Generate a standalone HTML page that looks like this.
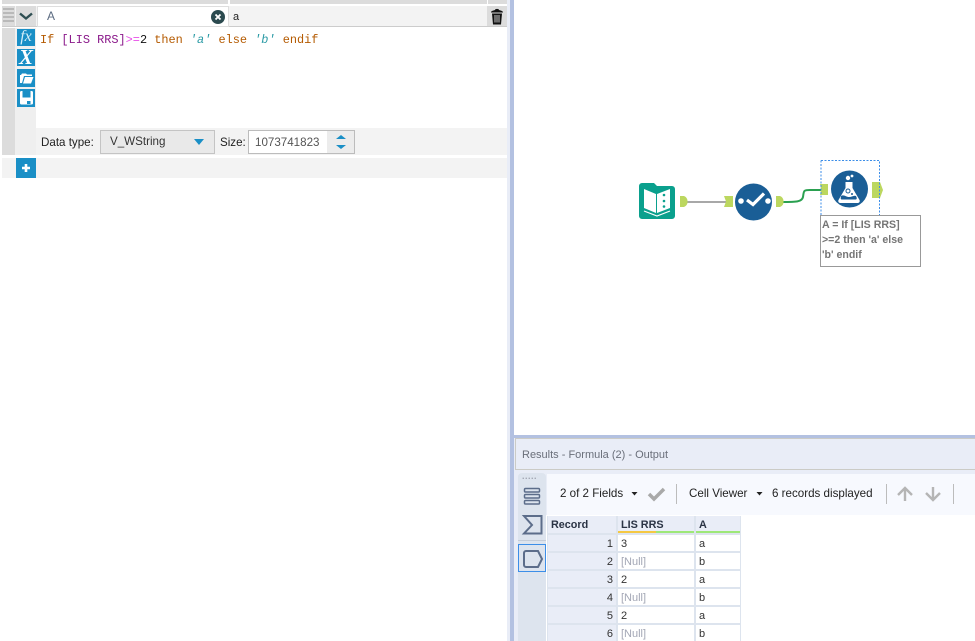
<!DOCTYPE html>
<html><head><meta charset="utf-8"><style>
html,body{margin:0;padding:0;background:#fff}
#p{position:relative;width:975px;height:641px;overflow:hidden;background:#fff;font-family:"Liberation Sans",sans-serif;font-size:11.6px;color:#222}
#p div,#p svg{position:absolute}
.t{white-space:nowrap;line-height:16px}
.ib{background:#1a8fc6;left:17px;width:18px}
.h{background:#e9edf7;top:516px;height:17px;font-weight:bold;font-size:10.8px;line-height:18px;color:#2a3344}
.c{background:#fff;height:16px;font-size:11px;line-height:18px;color:#333}
.r{background:#e9edf7;left:548px;width:68px;height:16px;font-size:11px;line-height:18px;text-align:right;color:#333}
.n{color:#a3a7b5}
</style></head><body><div id="p">

<!-- top tabs -->
<div style="left:2px;top:0;width:226px;height:4px;background:#dcdcdc"></div>
<div style="left:230px;top:0;width:277px;height:4px;background:#dcdcdc"></div>
<div style="left:487px;top:0;width:1px;height:4px;background:#fff"></div>

<!-- row -->
<div style="left:2px;top:6px;width:505px;height:20px;background:#f3f3f3"></div>
<div style="left:2px;top:26px;width:505px;height:1px;background:#ccc"></div>
<div style="left:2px;top:6px;width:13px;height:20px;background:#dcdcdc"></div>
<div style="left:3px;top:8px;width:11px;height:2px;background:#b9b9b9"></div>
<div style="left:3px;top:12px;width:11px;height:2px;background:#b9b9b9"></div>
<div style="left:3px;top:16px;width:11px;height:2px;background:#b9b9b9"></div>
<div style="left:3px;top:20px;width:11px;height:2px;background:#b9b9b9"></div>
<div style="left:16px;top:6px;width:20px;height:20px;background:#dcdcdc"></div>
<svg style="left:16px;top:6px" width="20" height="20"><path d="M4 7.500l6 5 6-5" fill="none" stroke="#2f4f53" stroke-width="2.400"/></svg>
<div style="left:37px;top:6px;width:190px;height:19px;background:#fff;border:1px solid #dedede"></div>
<div class="t" style="left:47px;top:8px;color:#5a6a80;font-size:12px">A</div>
<svg style="left:210px;top:9px" width="16" height="16"><circle cx="8" cy="8" r="7" fill="#2b4a4f"/><path d="M5.500 5.500l5 5M10.500 5.500l-5 5" stroke="#fff" stroke-width="1.800"/></svg>
<div class="t" style="left:233px;top:9px;font-size:11px">a</div>
<div style="left:487px;top:6px;width:20px;height:20px;background:#dcdcdc"></div>
<svg style="left:487px;top:6px" width="20" height="20"><path d="M4 6.500c0-2 3-2 4-2.500 0-1.500 4-1.500 4 0 1 .5 4 .5 4 2.500z" fill="#111"/><path d="M5 7.500h10l-1 11H6z" fill="#111"/><path d="M8 9v7.500M10 9v7.500M12 9v7.500" stroke="#ddd" stroke-width=".9"/></svg>

<!-- editor -->
<div style="left:2px;top:28px;width:13px;height:127px;background:#dcdcdc"></div>
<div style="left:15px;top:28px;width:21px;height:127px;background:#efefef"></div>
<div class="ib" style="top:29px;height:17px"></div>
<div class="t" style="left:17px;top:29px;width:18px;text-align:center;color:#d5eef9;font:italic 16px 'Liberation Serif',serif;line-height:16px">fx</div>
<div class="ib" style="top:49px;height:17px"></div>
<div class="t" style="left:17px;top:48px;width:18px;text-align:center;color:#fff;font:italic bold 21px 'Liberation Serif',serif;line-height:19px">X</div>
<div class="ib" style="top:69px;height:18px"></div>
<svg style="left:17px;top:69px" width="18" height="18"><path d="M3 14V6h1l1-1.500h4l1 1h5V7H7L5 14z" fill="#fff"/><path d="M6 14.500l2-6.500h8.500L14 14.500z" fill="#fff"/></svg>
<div class="ib" style="top:89px;height:18px"></div>
<svg style="left:17px;top:89px" width="18" height="18"><rect x="3" y="2" width="13" height="13.500" rx="1.500" fill="#fff"/><path d="M5.500 2h8v6.500h-8z" fill="#1a8fc6"/><path d="M10 12h3.500v3H10z" fill="#1a8fc6"/></svg>

<div class="t" style="left:40px;top:32px;font:11.9px/16px 'Liberation Mono',monospace;color:#b45a00"><span style="color:#b45a00">If</span> <span style="color:#8b1a8b">[LIS RRS]</span><span style="color:#e84de8">&gt;=</span><span style="color:#111">2</span> then <span style="color:#2a9aa5;font-style:italic">'a'</span> else <span style="color:#2a9aa5;font-style:italic">'b'</span> endif</div>

<div style="left:36px;top:128px;width:471px;height:27px;background:#f3f3f3"></div>
<div class="t" style="left:41px;top:135px">Data type:</div>
<div style="left:100px;top:130px;width:113px;height:22px;background:#e9e9e9;border:1px solid #c4c4c4"></div>
<div class="t" style="left:110px;top:134px;color:#333">V_WString</div>
<svg style="left:192px;top:138px" width="14" height="8"><path d="M2 1h10L7 7z" fill="#1a8fc6"/></svg>
<div class="t" style="left:220px;top:135px">Size:</div>
<div style="left:248px;top:130px;width:105px;height:22px;background:#fff;border:1px solid #bcbcbc"></div>
<div class="t" style="left:255px;top:135px;color:#555">1073741823</div>
<div style="left:327px;top:131px;width:27px;height:22px;background:#ececec"></div>
<svg style="left:331px;top:133px" width="20" height="18"><path d="M5 6l5-4 5 4z" fill="#1a8fc6"/><path d="M5 12l5 4 5-4z" fill="#1a8fc6"/></svg>

<div style="left:2px;top:158px;width:505px;height:20px;background:#f3f3f3"></div>
<div style="left:16px;top:158px;width:20px;height:20px;background:#1a8fc6"></div>
<svg style="left:16px;top:158px" width="20" height="20"><path d="M10 6v8M6 10h8" stroke="#fff" stroke-width="2.600"/></svg>

<!-- divider -->
<div style="left:507px;top:0;width:3px;height:641px;background:#e9edf7"></div>
<div style="left:510px;top:0;width:4px;height:641px;background:#b3c1e1"></div>

<!-- canvas -->
<svg style="left:630px;top:150px" width="345" height="125" viewBox="0 0 345 125">
<path d="M56 52H97" stroke="#a8a8a8" stroke-width="2" fill="none"/>
<path d="M152 52c14 0 20 0 21-5 1-6 0-7 7-7h14" stroke="#2aa050" stroke-width="2" fill="none"/>
<!-- book icon -->
<path d="M12 33h12l3 3h15a3 3 0 013 3v27a3 3 0 01-3 3H12a3 3 0 01-3-3V36a3 3 0 013-3z" fill="#0aa08d"/>
<path d="M14 39l12 5v19l-12-5zM27 44l13-5v19l-13 5z" fill="#fff"/>
<path d="M14 61l13 5 13-5" stroke="#fff" stroke-width="1.200" fill="none"/>
<circle cx="34" cy="45" r="1.300" fill="#0aa08d"/><circle cx="34" cy="51" r="1.300" fill="#0aa08d"/><circle cx="34" cy="56.500" r="1.300" fill="#0aa08d"/>
<!-- anchors -->
<path d="M50 46h4a6 6 0 010 11h-4z" fill="#bcd75f"/>
<path d="M94 46h9v11h-9l2-5.500z" fill="#bcd75f"/>
<circle cx="123.500" cy="52" r="18.500" fill="#1a5e96"/>
<circle cx="111" cy="51" r="2.800" fill="#fff"/><circle cx="138" cy="51" r="2.800" fill="#fff"/>
<path d="M117 50l6 4.500 11-11" stroke="#fff" stroke-width="3.200" fill="none"/>
<path d="M146 46h4a6 6 0 010 11h-4z" fill="#bcd75f"/>
<path d="M190 34h8v11h-8l1-5.500z" fill="#bcd75f"/>
<circle cx="219.500" cy="39" r="18.500" fill="#1a5e96"/>
<path d="M215.500 32h7v6l7 12a2 2 0 01-2 3h-17a2 2 0 01-2-3l7-12z" fill="#fff"/>
<path d="M211 46c3-2 5 1 8 1s5-2 7-1l.8 2c0 1-.5 1.500-1 1.500h-14c-1 0-1.300-1-1-2z" fill="#1a5e96"/>
<circle cx="218" cy="41" r="2" fill="none" stroke="#1a5e96" stroke-width="1"/><circle cx="222" cy="44" r="1" fill="#1a5e96"/>
<circle cx="218" cy="28" r="2.200" fill="#fff"/><circle cx="222" cy="26" r="1.400" fill="#fff"/>
<path d="M242 32h8l3 8-3 8h-8z" fill="#bcd75f"/>
<path d="M191 10.500H249.500V65M191 10.500V65" fill="none" stroke="#3c8ee8" stroke-width="1" stroke-dasharray="2 1.500"/>
</svg>
<div style="left:820px;top:215px;width:99px;height:50px;background:#fff;border:1px solid #999"></div>
<div class="t" style="left:822px;top:218px;font:bold 10.600px/15px 'Liberation Sans',sans-serif;color:#757575;white-space:pre">A = If [LIS RRS]
&gt;=2 then 'a' else
'b' endif</div>

<!-- results -->
<div style="left:514px;top:435px;width:461px;height:3px;background:#b3c1e1"></div>
<div style="left:514px;top:438px;width:461px;height:203px;background:#e9edf7"></div>
<div style="left:515px;top:438px;width:460px;height:30px;background:#e9edf7;border:1px solid #cbcbc6;border-right:0"></div>
<div class="t" style="left:522px;top:447px;font-size:11px;color:#6a6f7a">Results - Formula (2) - Output</div>

<div style="left:518px;top:473px;width:28px;height:168px;background:#dde4ee;border-radius:4px 4px 0 0"></div>
<div class="t" style="left:522px;top:468px;font-size:9px;color:#a0a4b0;letter-spacing:.5px;font-weight:bold">.....</div>
<div style="left:547px;top:474px;width:428px;height:41px;background:#f7f9fe"></div>
<div style="left:546px;top:515px;width:429px;height:126px;background:#fff"></div>

<svg style="left:518px;top:484px" width="28" height="88">
<rect x="6.500" y="4.500" width="15" height="3.500" rx="1" fill="#dde4ee" stroke="#5c6d8a" stroke-width="1.500"/>
<rect x="6.500" y="10.500" width="15" height="3.500" rx="1" fill="#dde4ee" stroke="#5c6d8a" stroke-width="1.500"/>
<rect x="6.500" y="16.500" width="15" height="3.500" rx="1" fill="#dde4ee" stroke="#5c6d8a" stroke-width="1.500"/>
<path d="M23.500 32H6l8 9-8 8.500h17.500z" fill="none" stroke="#5c6d8a" stroke-width="2"/>
<path d="M0 56.500h28" stroke="#c4ccd8"/>
<path d="M8 67h12l4 8-4 8H8a2 2 0 01-2-2V69a2 2 0 012-2z" fill="none" stroke="#5c6d8a" stroke-width="2"/>
</svg>
<div style="left:518px;top:544px;width:26px;height:26px;border:1px solid #3c8ee8"></div>

<div class="t" style="left:560px;top:486px;color:#222">2 of 2 Fields</div>
<svg style="left:630px;top:491px" width="10" height="6"><path d="M1.500 1h6L4.500 4.500z" fill="#222"/></svg>
<svg style="left:647px;top:486px" width="20" height="16"><path d="M2 8l5 5L17 3" fill="none" stroke="#a9a9a9" stroke-width="3.500"/></svg>
<div style="left:676px;top:484px;width:1px;height:20px;background:#bcbcbc"></div>
<div class="t" style="left:689px;top:486px">Cell Viewer</div>
<svg style="left:755px;top:491px" width="10" height="6"><path d="M1.500 1h6L4.500 4.500z" fill="#222"/></svg>
<div class="t" style="left:772px;top:486px">6 records displayed</div>
<div style="left:886px;top:484px;width:1px;height:20px;background:#bcbcbc"></div>
<svg style="left:895px;top:485px" width="48" height="18"><path d="M10 16V3M3 10l7-7 7 7" fill="none" stroke="#b5b5b5" stroke-width="2.400"/><path d="M38 2v13M31 8l7 7 7-7" fill="none" stroke="#b5b5b5" stroke-width="2.400"/></svg>
<div style="left:953px;top:484px;width:1px;height:20px;background:#bcbcbc"></div>

<!-- grid -->
<div style="left:547px;top:516px;width:194px;height:125px;background:#dde4ee"></div>
<div class="h" style="left:548px;padding-left:3px;width:65px">Record</div>
<div class="h" style="left:618px;width:73px;padding-left:3px">LIS RRS</div>
<div class="h" style="left:696px;width:41px;padding-left:3px">A</div>
<div style="left:618px;top:531px;width:38px;height:2px;background:#f5c842"></div>
<div style="left:656px;top:531px;width:38px;height:2px;background:#9ee878"></div>
<div style="left:696px;top:531px;width:44px;height:2px;background:#9ee878"></div>

<div class="r" style="top:535px;padding-right:3px;width:65px">1</div><div class="c" style="left:618px;top:535px;width:73px;padding-left:3px">3</div><div class="c" style="left:696px;top:535px;width:41px;padding-left:3px">a</div>
<div class="r" style="top:553px;padding-right:3px;width:65px">2</div><div class="c n" style="left:618px;top:553px;width:73px;padding-left:3px">[Null]</div><div class="c" style="left:696px;top:553px;width:41px;padding-left:3px">b</div>
<div class="r" style="top:571px;padding-right:3px;width:65px">3</div><div class="c" style="left:618px;top:571px;width:73px;padding-left:3px">2</div><div class="c" style="left:696px;top:571px;width:41px;padding-left:3px">a</div>
<div class="r" style="top:589px;padding-right:3px;width:65px">4</div><div class="c n" style="left:618px;top:589px;width:73px;padding-left:3px">[Null]</div><div class="c" style="left:696px;top:589px;width:41px;padding-left:3px">b</div>
<div class="r" style="top:607px;padding-right:3px;width:65px">5</div><div class="c" style="left:618px;top:607px;width:73px;padding-left:3px">2</div><div class="c" style="left:696px;top:607px;width:41px;padding-left:3px">a</div>
<div class="r" style="top:625px;padding-right:3px;width:65px">6</div><div class="c n" style="left:618px;top:625px;width:73px;padding-left:3px">[Null]</div><div class="c" style="left:696px;top:625px;width:41px;padding-left:3px">b</div>

</div></body></html>
